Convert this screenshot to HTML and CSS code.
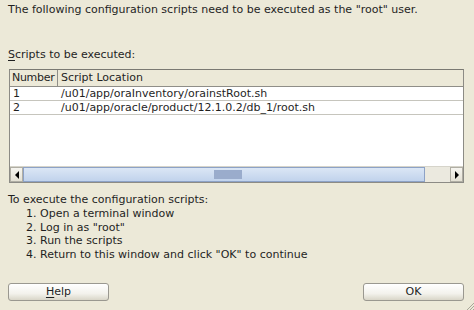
FILE: index.html
```html
<!DOCTYPE html>
<html lang="en">
     <head>
          <meta http-equiv="Content-type" content="text/html; charset=utf-8">
          <title>Execute Configuration Scripts</title>
          <link rel="stylesheet" href="styles.css">
     </head>
     <body>
          <div class="dialog">
               <div class="intro">The following configuration scripts need to be executed as the "root" user.</div>
               <div class="label"><u>S</u>cripts to be executed:</div>
               <div class="table-box">
                    <div class="table-view">
                         <div class="row header">
                              <div class="cell num">Number</div>
                              <div class="cell loc">Script Location</div>
                         </div>
                         <div class="row">
                              <div class="cell num">1</div>
                              <div class="cell loc">/u01/app/oraInventory/orainstRoot.sh</div>
                         </div>
                         <div class="row">
                              <div class="cell num">2</div>
                              <div class="cell loc">/u01/app/oracle/product/12.1.0.2/db_1/root.sh</div>
                         </div>
                    </div>
                    <div class="hscroll">
                         <div class="arrow left"><span></span></div>
                         <div class="thumb"><div class="grip"></div></div>
                         <div class="track"></div>
                         <div class="arrow right"><span></span></div>
                    </div>
               </div>
               <div class="steps">
                    <div>To execute the configuration scripts:</div>
                    <ol>
                         <li>Open a terminal window</li>
                         <li>Log in as "root"</li>
                         <li>Run the scripts</li>
                         <li>Return to this window and click "OK" to continue</li>
                    </ol>
               </div>
               <div class="buttons">
                    <div class="btn"><u>H</u>elp</div>
                    <div class="btn">OK</div>
               </div>
               <svg class="resize" width="8" height="8" viewBox="0 0 8 8">
                    <path d="M8 1 L1 8 M8 4 L4 8 M8 7 L7 8" stroke="#a9a698" stroke-width="1"/>
               </svg>
          </div>
     </body>
</html>
```

FILE: styles.css
```css
html{
     height: 100%;
}
body{
     margin: 0;
     padding: 0;
     height: 100%;
     background-color: #ece9d8;
     font-family: "DejaVu Sans", sans-serif;
     font-size: 11px;
     color: #1f1f1f;
}
.dialog{
     position: relative;
     height: 310px;
     box-sizing: border-box;
     padding: 3px 10px 9px 8px;
     display: flex;
     flex-direction: column;
}
.intro{
     line-height: 14px;
}
.label{
     line-height: 14px;
     margin-top: 31px;
}
u{
     text-decoration-thickness: 1px;
     text-underline-offset: 2px;
}
.table-box{
     margin-top: 7px;
     margin-left: 1px;
     height: 114px;
     box-sizing: border-box;
     border: 1px solid #8c8b85;
     border-top-color: #7a7972;
     display: flex;
     flex-direction: column;
     background-color: #fff;
}
.table-view{
     flex: 1;
}
.row{
     display: flex;
     height: 13px;
     line-height: 13px;
     border-bottom: 1px solid #c6c5bd;
}
.row.header{
     height: 16px;
     line-height: 16px;
     background-color: #ece9d8;
     border-bottom: 1px solid #8f8e88;
}
.cell{
     padding-left: 3px;
     white-space: nowrap;
}
.num{
     width: 44px;
}
.row .num{
     width: 45px;
}
.row.header .num{
     border-right: 1px solid #8f8e88;
     width: 45px;
     padding-left: 2px;
     letter-spacing: -0.3px;
     overflow: hidden;
}
.hscroll{
     height: 15px;
     display: flex;
     background-color: #f4f3ee;
     border-top: 1px solid #d6d4ca;
}
.arrow{
     width: 13px;
     box-sizing: border-box;
     border: 1px solid #b0aea4;
     background: linear-gradient(#f6f5f0, #e4e1d4);
     display: flex;
     align-items: center;
     justify-content: center;
}
.arrow span{
     width: 0;
     height: 0;
     border-top: 4px solid transparent;
     border-bottom: 4px solid transparent;
}
.arrow.left span{
     border-right: 4px solid #000;
}
.arrow.right span{
     border-left: 4px solid #000;
}
.thumb{
     width: 402px;
     box-sizing: border-box;
     border: 1px solid #8da2c6;
     background: linear-gradient(#dbe6f5, #c1d3ec);
     display: flex;
     justify-content: center;
     align-items: center;
}
.grip{
     width: 28px;
     height: 9px;
     margin-left: 8px;
     background-image: radial-gradient(#9aaccc 0.8px, transparent 1px);
     background-size: 2px 2px;
}
.track{
     flex: 1;
     background-color: #ebe9df;
}
.steps{
     margin-top: 10px;
     line-height: 13.8px;
}
.steps ol{
     margin: 0;
     padding-left: 32px;
}
.buttons{
     margin-top: auto;
     display: flex;
     justify-content: space-between;
}
.btn{
     width: 101px;
     height: 18px;
     box-sizing: border-box;
     border: 1px solid #9a9890;
     border-radius: 3px;
     background: linear-gradient(#ffffff, #f3f2ec 60%, #d9d6c8);
     text-align: center;
     line-height: 16px;
}
.resize{
     position: absolute;
     right: 0;
     bottom: 0;
}
```
